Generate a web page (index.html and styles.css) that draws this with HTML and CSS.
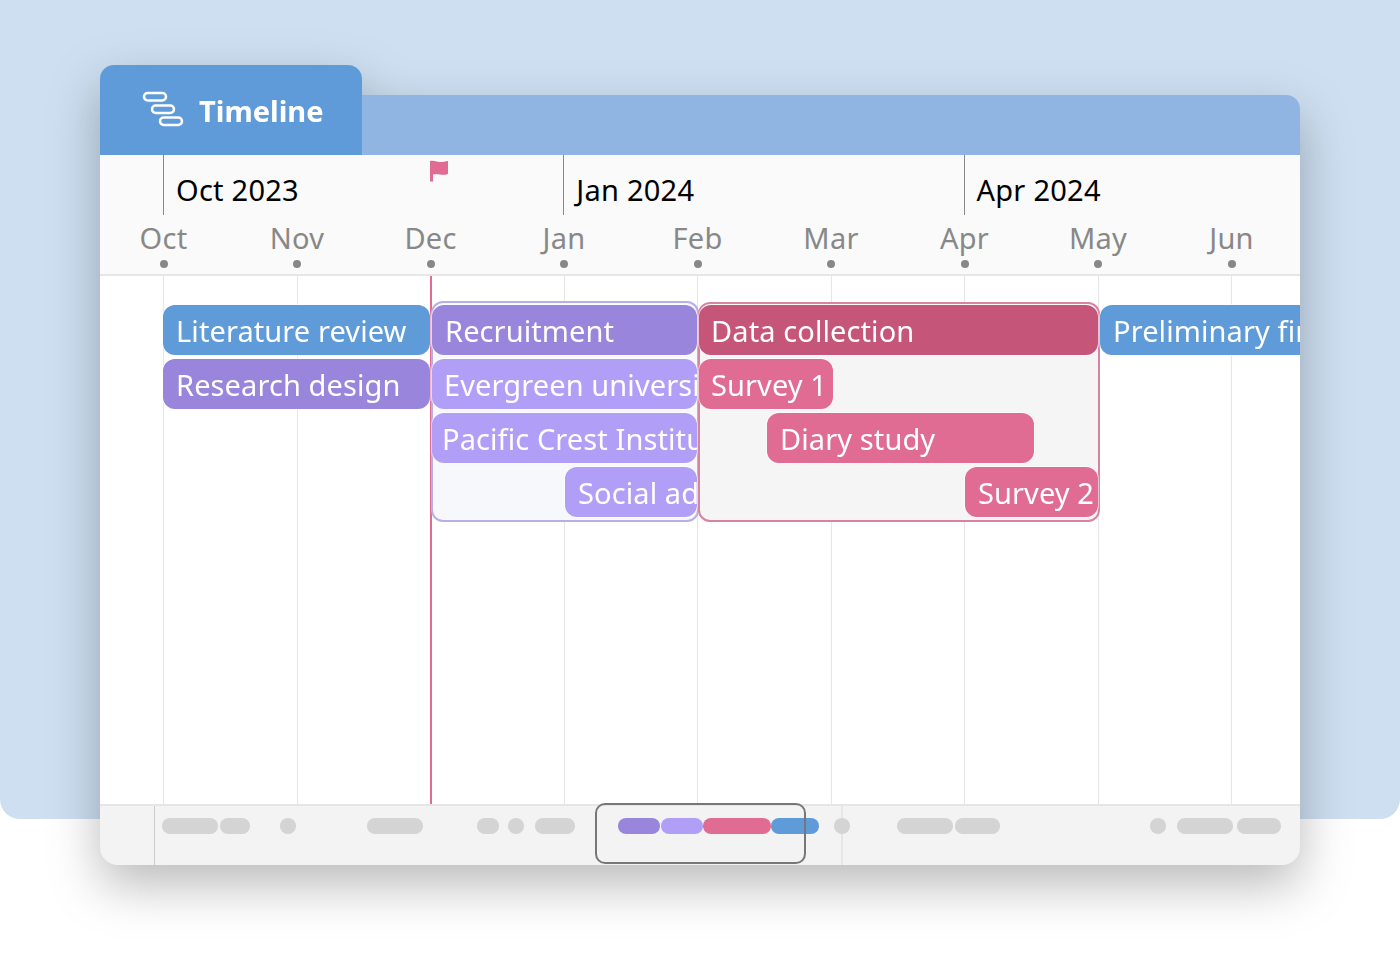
FILE: index.html
```html
<!DOCTYPE html>
<html lang="en">
<head>
    <meta charset="UTF-8">
    <meta name="viewport" content="width=device-width, initial-scale=1.0">
    <title>Timeline</title>
    <link rel="stylesheet" href="styles.css">
</head>
<body>
    <div class="backdrop">
        <div class="window">
            <header class="titlebar">
                <div class="tab">
                    <svg class="tab-icon" width="42" height="36" viewBox="0 0 42 36" fill="none" stroke="#fff" stroke-width="2.500">
                        <rect x="2" y="2" width="22" height="7.500" rx="3.700"/>
                        <rect x="10" y="14.500" width="22" height="7.500" rx="3.700"/>
                        <rect x="18" y="26.500" width="22" height="7.500" rx="3.700"/>
                    </svg>
                    <span class="tab-label">Timeline</span>
                </div>
            </header>

            <div class="quarters">
                <div class="quarter quarter-first">Oct 2023</div>
                <div class="quarter">Jan 2024</div>
                <div class="quarter">Apr 2024</div>
                <svg class="flag" width="20" height="22" viewBox="0 0 20 22" fill="#e06b93">
                    <path d="M1 1 C5 0 8 2 11 2 C14 2 16 1.500 19 1 L19 14 C16 15 14 15 11 14.500 C8 14 6 14 4 14.500 L4 21.500 L1 21.500 Z"/>
                </svg>
            </div>

            <div class="months">
                <div class="month" style="left: 63.500px">Oct</div>
                <div class="month" style="left: 197px">Nov</div>
                <div class="month" style="left: 330.500px">Dec</div>
                <div class="month" style="left: 464px">Jan</div>
                <div class="month" style="left: 597.500px">Feb</div>
                <div class="month" style="left: 731px">Mar</div>
                <div class="month" style="left: 864.500px">Apr</div>
                <div class="month" style="left: 998px">May</div>
                <div class="month" style="left: 1131.500px">Jun</div>
            </div>

            <div class="chart">
                <!-- month grid -->
                <i class="gridline" style="left: 63px"></i>
                <i class="gridline" style="left: 196.500px"></i>
                <i class="gridline" style="left: 463.500px"></i>
                <i class="gridline" style="left: 597px"></i>
                <i class="gridline" style="left: 730.500px"></i>
                <i class="gridline" style="left: 864px"></i>
                <i class="gridline" style="left: 997.500px"></i>
                <i class="gridline" style="left: 1131px"></i>
                <i class="today"></i>

                <div class="group group-purple" style="left: 331px; width: 268px"></div>
                <div class="group group-pink" style="left: 598px; width: 402px"></div>

                <div class="bar bar-blue row-1" style="left: 63px; width: 267px">Literature review</div>
                <div class="bar bar-purple row-2" style="left: 63px; width: 267px">Research design</div>

                <div class="bar bar-purple row-1" style="left: 332px; width: 265px">Recruitment</div>
                <div class="bar bar-lilac row-2" style="left: 332px; width: 265px; text-indent: -1px">Evergreen university</div>
                <div class="bar bar-lilac row-3" style="left: 332px; width: 265px; text-indent: -3px">Pacific Crest Institute</div>
                <div class="bar bar-lilac row-4" style="left: 465px; width: 132px">Social ad campaign</div>

                <div class="bar bar-rose row-1" style="left: 599px; width: 399px; text-indent: -1px">Data collection</div>
                <div class="bar bar-pink row-2" style="left: 599px; width: 134px; text-indent: -1px">Survey 1</div>
                <div class="bar bar-pink row-3" style="left: 667px; width: 267px">Diary study</div>
                <div class="bar bar-pink row-4" style="left: 865px; width: 133px">Survey 2</div>

                <div class="bar bar-blue bar-open row-1" style="left: 1000px; width: 260px">Preliminary findings</div>
            </div>

            <div class="minimap">
                <i class="mini-line" style="left: 54px"></i>
                <i class="mini-line mini-line-light" style="left: 741px"></i>
                <i class="pill" style="left: 62px; width: 56px"></i>
                <i class="pill" style="left: 120px; width: 30px"></i>
                <i class="pill" style="left: 180px; width: 16px"></i>
                <i class="pill" style="left: 267px; width: 56px"></i>
                <i class="pill" style="left: 377px; width: 22px"></i>
                <i class="pill" style="left: 408px; width: 16px"></i>
                <i class="pill" style="left: 435px; width: 40px"></i>
                <i class="pill pill-purple" style="left: 518px; width: 42px"></i>
                <i class="pill pill-lilac" style="left: 561px; width: 42px"></i>
                <i class="pill pill-pink" style="left: 603px; width: 68px"></i>
                <i class="pill pill-blue" style="left: 671px; width: 48px"></i>
                <i class="pill" style="left: 734px; width: 16px"></i>
                <i class="pill" style="left: 797px; width: 56px"></i>
                <i class="pill" style="left: 855px; width: 45px"></i>
                <i class="pill" style="left: 1050px; width: 16px"></i>
                <i class="pill" style="left: 1077px; width: 56px"></i>
                <i class="pill" style="left: 1137px; width: 44px"></i>
                <div class="viewport"></div>
            </div>
        </div>
    </div>
</body>
</html>
```

FILE: styles.css
```css
body {
    height: 955px;
    margin: 0;
    background-color: #fff;
    font-family: "Noto Sans", Arial, sans-serif;
}

.backdrop {
    height: 819px;
    padding: 65px 100px 0;
    box-sizing: border-box;
    background-color: #cddff1;
    border-radius: 0 0 20px 20px;
}

.window {
    position: relative;
    height: 800px;
    filter: drop-shadow(0 20px 25px rgba(0, 0, 0, 0.27));
}

.titlebar {
    display: flex;
    align-items: flex-start;
    height: 60px;
    margin-top: 30px;
    background-color: #90b5e3;
    border-radius: 0 14px 0 0;
}

.tab {
    display: flex;
    align-items: center;
    gap: 15px;
    width: 262px;
    height: 90px;
    margin-top: -30px;
    padding-left: 42px;
    box-sizing: border-box;
    background-color: #5f9bd9;
    border-radius: 14px 14px 0 0;
}

.tab-icon {
    flex: none;
    margin-top: -2px;
}

.tab-label {
    color: #fff;
    font-size: 29px;
    font-weight: 700;
}

.quarters {
    position: relative;
    display: flex;
    height: 60px;
    padding-left: 63px;
    background-color: #fafafa;
}

.quarter {
    width: 400.250px;
    flex: none;
    box-sizing: border-box;
    padding: 16px 0 0 12px;
    border-left: 1px solid #888;
    color: #000;
    font-size: 29px;
    line-height: 38px;
    letter-spacing: 0.25px;
    white-space: nowrap;
}

.flag {
    position: absolute;
    left: 329px;
    top: 5px;
}

.months {
    position: relative;
    height: 61px;
    box-sizing: border-box;
    background-color: #fafafa;
    border-bottom: 2px solid #e6e6e6;
}

.month {
    position: absolute;
    top: 4px;
    width: 80px;
    margin-left: -40px;
    color: #888;
    font-size: 29px;
    line-height: 38px;
    letter-spacing: 0.25px;
    text-align: center;
}

.month::after {
    content: "";
    position: absolute;
    left: 36px;
    top: 41px;
    width: 8px;
    height: 8px;
    border-radius: 50%;
    background-color: #888;
}

.chart {
    position: relative;
    height: 528px;
    overflow: hidden;
    background-color: #fff;
}

.gridline {
    position: absolute;
    top: 0;
    bottom: 0;
    width: 1px;
    background-color: #e6e6e6;
}

.today {
    position: absolute;
    top: 0;
    bottom: 0;
    left: 330px;
    width: 2px;
    background-color: #e06b93;
}

.group {
    position: absolute;
    box-sizing: border-box;
    border: 2px solid;
    border-radius: 12px;
}

.group-purple {
    top: 25px;
    height: 221px;
    background-color: #f7f8fb;
    border-color: #b9aee6;
}

.group-pink {
    top: 26px;
    height: 220px;
    background-color: #f5f5f5;
    border-color: #d9849f;
}

.bar {
    position: absolute;
    height: 50px;
    box-sizing: border-box;
    padding: 1px 0 0 13px;
    overflow: hidden;
    border-radius: 12px;
    box-shadow: 0 0 0 1px rgba(255, 255, 255, 0.5);
    color: #fff;
    font-size: 29px;
    line-height: 49px;
    letter-spacing: 0.1px;
    white-space: nowrap;
}

.bar-open {
    border-radius: 12px 0 0 12px;
}

.row-1 { top: 29px; }
.row-2 { top: 83px; }
.row-3 { top: 137px; }
.row-4 { top: 191px; }

.bar-blue { background-color: #5f9bd9; }
.bar-purple { background-color: #9985dc; }
.bar-lilac { background-color: #b19ff7; }
.bar-pink { background-color: #e06b93; }
.bar-rose { background-color: #c65679; }

.minimap {
    position: relative;
    height: 61px;
    box-sizing: border-box;
    background-color: #f3f3f3;
    border-top: 2px solid #e6e6e6;
    border-radius: 0 0 18px 18px;
}

.mini-line {
    position: absolute;
    top: 0;
    bottom: 0;
    width: 1px;
    background-color: #ccc;
}

.mini-line-light {
    width: 2px;
    background-color: #e6e6e6;
}

.pill {
    position: absolute;
    top: 12px;
    height: 16px;
    border-radius: 8px;
    background-color: #d4d4d4;
}

.pill-purple { background-color: #9985dc; }
.pill-lilac { background-color: #b19ff7; }
.pill-pink { background-color: #e06b93; }
.pill-blue { background-color: #5f9bd9; }

.viewport {
    position: absolute;
    left: 495px;
    top: -3px;
    width: 211px;
    height: 61px;
    box-sizing: border-box;
    border: 2px solid #777;
    border-radius: 10px;
}
```
